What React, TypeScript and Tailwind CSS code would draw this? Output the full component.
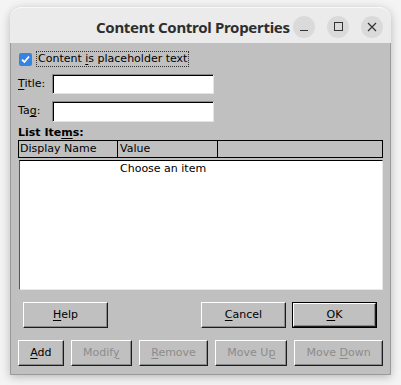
import { type ReactNode } from 'react';

const body = { fontFamily: '"DejaVu Sans", sans-serif' };

const U = ({ children }: { children: ReactNode }) => <span className="underline underline-offset-2">{children}</span>;

const Btn = ({ children, w, disabled, isDefault }: { children: ReactNode; w: string; disabled?: boolean; isDefault?: boolean }) => (
    <div className={`${w} h-[26px] ${isDefault ? 'border border-black' : ''} flex`}>
        <div
            className={`flex-1 flex items-center justify-center border border-t-white border-l-white border-b-[#1c1c1c] border-r-[#1c1c1c] shadow-[inset_-1px_-1px_0_#8a8a8a] text-[11px] ${disabled ? 'text-[#8c8c8c]' : 'text-black'}`}
        >
            {children}
        </div>
    </div>
);

const Field = ({ h }: { h: string }) => (
    <div className={`w-[162px] ${h} bg-white border border-t-[#8a8a8a] border-l-[#8a8a8a] border-b-[#e4e4e4] border-r-[#e4e4e4] shadow-[inset_1px_1px_0_#000]`} />
);

export default function App() {
    return (
        <div className="w-[401px] h-[385px] bg-[#f4f4f4] pt-[7px] pl-[10px]" style={body}>
            <div className="w-[381px] h-[368px] flex flex-col rounded-t-[12px] shadow-[0_2px_10px_rgba(0,0,0,0.25)]">
                {/* title bar */}
                <div className="h-[36px] bg-[#ebebeb] rounded-t-[12px] border-t border-[#f8f8f8] flex items-center relative">
                    <div
                        className="absolute left-[86px] top-[8px] text-[15px] font-bold text-[#2e2e2e] tracking-[-0.3px]"
                        style={{ fontFamily: '"Noto Sans", sans-serif' }}
                    >
                        Content Control Properties
                    </div>
                    <div className="ml-auto mr-[8px] flex gap-[12px] mt-[2px]">
                        <div className="w-[22px] h-[22px] rounded-full bg-[#dadada] flex items-center justify-center">
                            <div className="w-[8px] h-[1px] bg-[#333] mt-[7px]" />
                        </div>
                        <div className="w-[22px] h-[22px] rounded-full bg-[#dadada] flex items-center justify-center">
                            <div className="w-[9px] h-[9px] border border-[#333]" />
                        </div>
                        <div className="w-[22px] h-[22px] rounded-full bg-[#dadada] flex items-center justify-center">
                            <svg width="10" height="10" viewBox="0 0 10 10" stroke="#333" strokeWidth="1.2">
                                <path d="M1 1L9 9M9 1L1 9" />
                            </svg>
                        </div>
                    </div>
                </div>

                {/* body */}
                <div className="flex-1 bg-[#c0c0c0] border-x border-b border-[#9a9a9a] pl-[7px] pr-[7px] text-[11px] text-black flex flex-col">
                    <div className="flex items-center mt-[8px] h-[16px]">
                        <div className="w-[13px] h-[13px] ml-[1px] rounded-[2px] bg-[#3584e4] flex items-center justify-center">
                            <svg width="9" height="9" viewBox="0 0 9 9" fill="none" stroke="white" strokeWidth="1.8">
                                <path d="M1 4.6L3.4 7L8 1.5" />
                            </svg>
                        </div>
                        <div className="ml-[4px] border border-dotted border-[#333] px-[1px] h-[16px] flex items-center">
                            <span>Content <U>i</U>s placeholder text</span>
                        </div>
                    </div>

                    <div className="flex items-center mt-[7px]">
                        <span className="w-[34px]"><U>T</U>itle:</span>
                        <Field h="h-[20px]" />
                    </div>
                    <div className="flex items-center mt-[7px]">
                        <span className="w-[34px]">Ta<U>g</U>:</span>
                        <Field h="h-[21px]" />
                    </div>

                    <div className="font-bold mt-[4px] leading-[14px]">List Ite<U>m</U>s:</div>

                    <div className="h-[18px] w-[365px] border border-black flex">
                        <div className="w-[99px] border-r border-black pl-[1px] leading-[16px]">Display Name</div>
                        <div className="w-[100px] border-r border-black pl-[2px] leading-[16px]">Value</div>
                        <div className="flex-1" />
                    </div>

                    <div className="mt-[2px] ml-[1px] w-[364px] h-[130px] bg-white border border-t-black border-l-[#555] border-b-[#e8e8e8] border-r-[#e8e8e8]">
                        <div className="pl-[100px] pt-[1px] leading-[14px]">Choose an item</div>
                    </div>

                    <div className="flex mt-[12px] pl-[5px]">
                        <Btn w="w-[85px]"><span><U>H</U>elp</span></Btn>
                        <div className="flex-1" />
                        <Btn w="w-[85px]"><span><U>C</U>ancel</span></Btn>
                        <div className="w-[6px]" />
                        <Btn w="w-[85px]" isDefault><span><U>O</U>K</span></Btn>
                        <div className="w-[6px]" />
                    </div>

                    <div className="flex mt-[12px] gap-[7px]">
                        <Btn w="w-[46px]"><span><U>A</U>dd</span></Btn>
                        <Btn w="w-[61px]" disabled><span>Modif<U>y</U></span></Btn>
                        <Btn w="w-[70px]" disabled><span><U>R</U>emove</span></Btn>
                        <Btn w="w-[72px]" disabled><span>Move U<U>p</U></span></Btn>
                        <Btn w="w-[89px]" disabled><span>Move <U>D</U>own</span></Btn>
                    </div>
                </div>
            </div>
        </div>
    );
}
